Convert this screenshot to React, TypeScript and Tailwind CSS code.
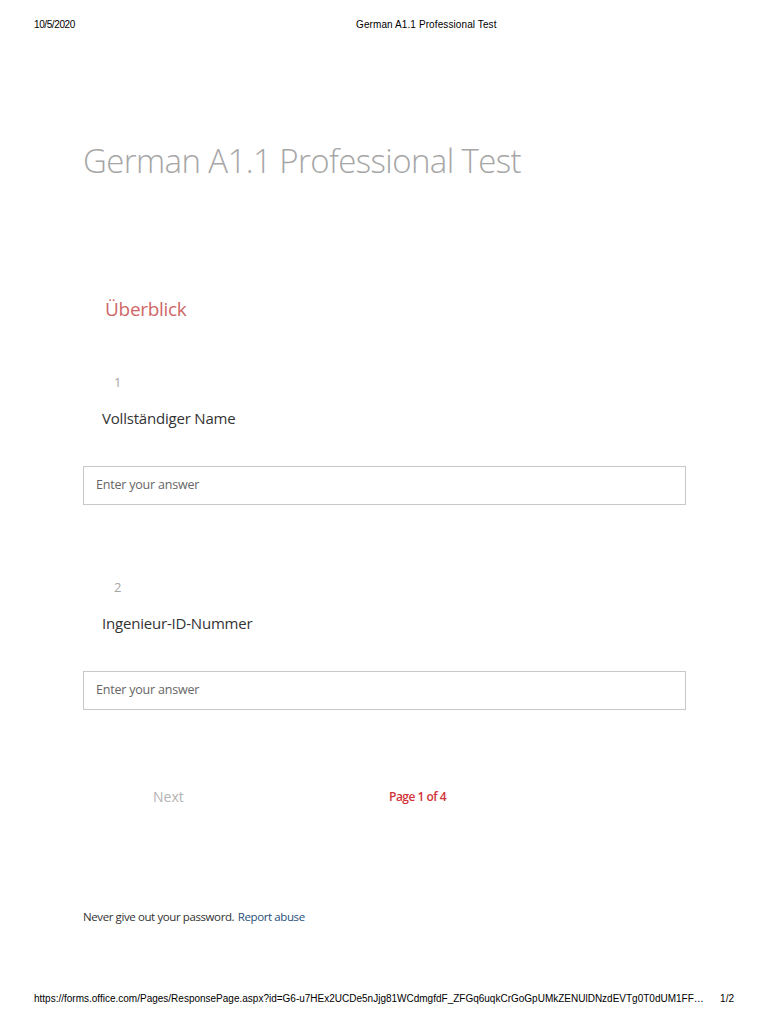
export default function App() {
  return (
    <div className="relative h-[1024px] w-[768px] overflow-hidden bg-white font-['Liberation_Sans',Arial,sans-serif]">
      {/* Print header */}
      <div className="flex h-[48px] items-center px-[34px] text-[10px] text-black">
        <span className="w-[322px] tracking-[-0.4px]">10/5/2020</span>
        <span className="tracking-[0.1px]">German A1.1 Professional Test</span>
      </div>

      <div className="font-['Open_Sans','Noto_Sans',sans-serif]">
        <h1 className="mt-[93px] pl-[83px] text-[33px] font-light leading-[40px] tracking-[-0.6px] text-[#a6a6a6]">
          German A1.1 Professional Test
        </h1>

        <div className="mt-[114px] pl-[105px] text-[19px] leading-[28px] tracking-[-0.3px] text-[#d06767]">
          Überblick
        </div>

        <div className="px-[83px] pr-[82px]">
          <Question num="1" label="Vollständiger Name" top="mt-[49px]" />
          <Question num="2" label="Ingenieur-ID-Nummer" top="mt-[72px]" />

          <div className="mt-[76px] flex items-center">
            <span className="w-[306px] pl-[70px] text-[14px] text-[#b3b3b3]">Next</span>
            <span className="text-[12px] font-semibold tracking-[-0.5px] text-[#d13438]">Page 1 of 4</span>
          </div>

          <div className="mt-[101px] text-[11.5px] tracking-[-0.4px] text-[#333333]">
            Never give out your password.{" "}
            <span className="ml-[1px] text-[#1f4e79]">Report abuse</span>
          </div>
        </div>
      </div>

      {/* Print footer */}
      <div className="absolute bottom-[18px] left-[34px] right-[34px] flex items-center justify-between text-[10px] text-black">
        <span className="tracking-[0px]">
          https://forms.office.com/Pages/ResponsePage.aspx?id=G6-u7HEx2UCDe5nJjg81WCdmgfdF_ZFGq6uqkCrGoGpUMkZENUlDNzdEVTg0T0dUM1FF…
        </span>
        <span>1/2</span>
      </div>
    </div>
  );
}

function Question({ num, label, top }: { num: string; label: string; top: string }) {
  return (
    <div className={top}>
      <div className="pl-[31px] text-[13px] leading-[20px] text-[#a6a6a6]">{num}</div>
      <div className="mt-[15px] pl-[19px] text-[15px] leading-[22px] tracking-[-0.2px] text-[#333333]">{label}</div>
      <div className="mt-[37px] flex h-[39px] items-center border border-[#c8c8c8] px-[12px] text-[12.5px] tracking-[-0.2px] text-[#666666]">
        Enter your answer
      </div>
    </div>
  );
}
